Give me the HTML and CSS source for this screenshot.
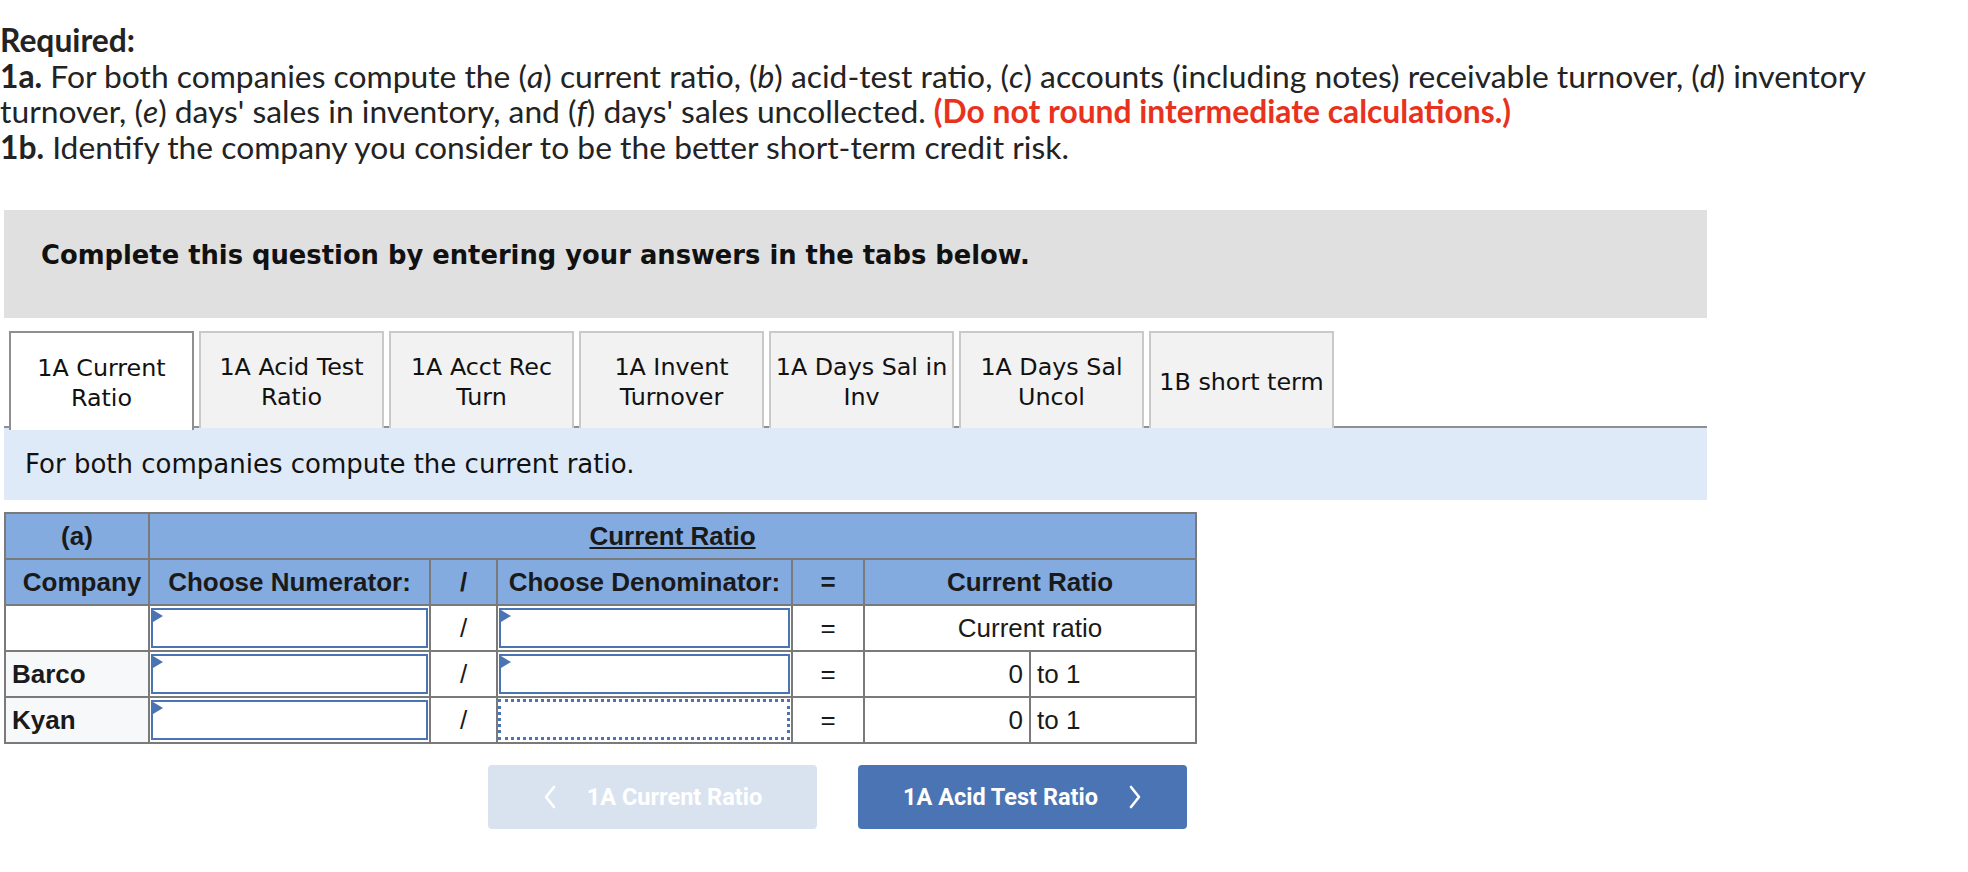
FILE: index.html
```html
<!DOCTYPE html>
<html>
<head>
<meta charset="utf-8">
<link rel="stylesheet" href="styles.css">
</head>
<body>
<div class="req">
  <div class="req-title">Required:</div>
  <div><b>1a.</b> For both companies compute the (<i>a</i>) current ratio, (<i>b</i>) acid-test ratio, (<i>c</i>) accounts (including notes) receivable turnover, (<i>d</i>) inventory turnover, (<i>e</i>) days' sales in inventory, and (<i>f</i>) days' sales uncollected. <b class="red">(Do not round intermediate calculations.)</b></div>
  <div><b>1b.</b> Identify the company you consider to be the better short-term credit risk.</div>
</div>

<div class="notice">Complete this question by entering your answers in the tabs below.</div>

<div class="tabwrap">
  <div class="tabs">
    <div class="tab active">1A Current<br>Ratio</div>
    <div class="tab">1A Acid Test<br>Ratio</div>
    <div class="tab">1A Acct Rec<br>Turn</div>
    <div class="tab">1A Invent<br>Turnover</div>
    <div class="tab">1A Days Sal in<br>Inv</div>
    <div class="tab">1A Days Sal<br>Uncol</div>
    <div class="tab">1B short term</div>
  </div>
  <div class="panel">For both companies compute the current ratio.</div>
</div>

<table class="grid">
  <colgroup>
    <col class="c-co"><col class="c-num"><col class="c-sl"><col class="c-den"><col class="c-eq"><col class="c-r1"><col class="c-r2">
  </colgroup>
  <tr class="hd">
    <th>(a)</th>
    <th colspan="6"><span class="ul">Current Ratio</span></th>
  </tr>
  <tr class="hd">
    <th class="co-h">Company</th>
    <th>Choose Numerator:</th>
    <th>/</th>
    <th>Choose Denominator:</th>
    <th>=</th>
    <th colspan="2">Current Ratio</th>
  </tr>
  <tr>
    <td class="co blank"></td>
    <td class="in"><div class="box"><span class="tri"></span></div></td>
    <td class="op">/</td>
    <td class="in"><div class="box"><span class="tri"></span></div></td>
    <td class="op">=</td>
    <td colspan="2" class="ctr">Current ratio</td>
  </tr>
  <tr>
    <td class="co">Barco</td>
    <td class="in"><div class="box"><span class="tri"></span></div></td>
    <td class="op">/</td>
    <td class="in"><div class="box"><span class="tri"></span></div></td>
    <td class="op">=</td>
    <td class="val">0</td>
    <td class="unit">to 1</td>
  </tr>
  <tr>
    <td class="co">Kyan</td>
    <td class="in"><div class="box"><span class="tri"></span></div></td>
    <td class="op">/</td>
    <td class="in"><div class="box dotted"></div></td>
    <td class="op">=</td>
    <td class="val">0</td>
    <td class="unit">to 1</td>
  </tr>
</table>

<div class="navs">
  <div class="btn prev">
    <svg class="chev" width="14" height="24" viewBox="0 0 14 24"><polyline points="11,2 3,12 11,22" fill="none" stroke="#ffffff" stroke-width="2.6" stroke-linecap="round" stroke-linejoin="round"/></svg>
    <span>1A Current Ratio</span>
  </div>
  <div class="btn next">
    <span>1A Acid Test Ratio</span>
    <svg class="chev" width="14" height="24" viewBox="0 0 14 24"><polyline points="3,2 11,12 3,22" fill="none" stroke="#ffffff" stroke-width="2.6" stroke-linecap="round" stroke-linejoin="round"/></svg>
  </div>
</div>
</body>
</html>
```

FILE: styles.css
```css
html, body {
  margin: 0;
  padding: 0;
  background: #ffffff;
}
body {
  width: 1968px;
  color: #222222;
}
.req {
  font-family: Lato, "Open Sans", sans-serif;
  font-size: 31.8px;
  line-height: 35.6px;
  color: #232323;
  padding-top: 23px;
}
.req-title {
  font-weight: 700;
}
.req b { font-weight: 700; }
.req .red { color: #e8321e; }

.notice {
  margin: 45px 0 0 4px;
  width: 1666px;
  height: 90px;
  padding: 0 0 18px 37px;
  background: #e0e0e0;
  display: flex;
  align-items: center;
  font-family: "DejaVu Sans", Verdana, sans-serif;
  font-weight: 700;
  font-size: 25.8px;
  color: #111111;
}

.tabwrap {
  margin: 13px 0 0 4px;
  width: 1703px;
}
.tabs {
  display: flex;
  gap: 5px;
  padding-left: 5px;
  border-bottom: 2px solid #8f8f8f;
  height: 95px;
}
.tab {
  width: 181px;
  height: 93px;
  border: 2px solid #c9c9c9;
  border-bottom: none;
  background: #f2f2f2;
  display: flex;
  align-items: center;
  justify-content: center;
  text-align: center;
  font-family: "DejaVu Sans", Verdana, sans-serif;
  font-size: 23.8px;
  line-height: 30px;
  color: #111111;
  padding-top: 2px;
}
.tab.active {
  background: #ffffff;
  border-color: #8f8f8f;
  height: 95px;
  position: relative;
  z-index: 1;
}
.panel {
  height: 72px;
  background: #deeaf7;
  display: flex;
  align-items: center;
  padding-left: 21px;
  font-family: "DejaVu Sans", Verdana, sans-serif;
  font-size: 26px;
  color: #111111;
}

.grid {
  margin: 12px 0 0 4px;
  border-collapse: collapse;
  table-layout: fixed;
  width: 1191px;
  font-family: "Liberation Sans", Arial, sans-serif;
  font-size: 26px;
  color: #1a1a1a;
}
.c-co { width: 144px; }
.c-num { width: 281px; }
.c-sl { width: 67px; }
.c-den { width: 295px; }
.c-eq { width: 72px; }
.c-r1 { width: 166px; }
.c-r2 { width: 166px; }
.grid th, .grid td {
  border: 2px solid #7a7a7a;
  height: 44px;
  padding: 0;
}
.grid tr.hd th {
  background: #83abe0;
  font-weight: 700;
  text-align: center;
}
.grid tr.hd th.co-h { padding-left: 10px; }
.ul { text-decoration: underline; }
.grid td.co {
  background: #f7f8fa;
  font-weight: 700;
  text-align: left;
  padding-left: 6px;
}
.grid td.co.blank { background: #ffffff; }
.grid td.op, .grid td.ctr { text-align: center; }
.grid td.val { text-align: right; padding-right: 6px; }
.grid td.unit { text-align: left; padding-left: 6px; }
.box {
  height: 36px;
  margin: 1px;
  border: 2px solid #4a74b4;
  background: #ffffff;
  position: relative;
}
.box.dotted {
  border: 3px dotted #4a74b4;
  height: 35px;
  margin: 0 1px 1px 0;
}
.tri {
  position: absolute;
  left: 0;
  top: 0;
  width: 0;
  height: 0;
  border-top: 6px solid transparent;
  border-bottom: 6px solid transparent;
  border-left: 10px solid #4a74b4;
}

.navs {
  display: flex;
  gap: 41px;
  margin: 21px 0 0 488px;
}
.btn {
  width: 329px;
  height: 64px;
  border-radius: 4px;
  display: flex;
  align-items: center;
  justify-content: center;
  gap: 30px;
  font-family: Roboto, sans-serif;
  font-weight: 700;
  font-size: 23.5px;
  color: #ffffff;
}
.btn.prev { background: #d9e3f0; }
.btn.next { background: #4a74b4; }
.chev {
  display: block;
}
```
